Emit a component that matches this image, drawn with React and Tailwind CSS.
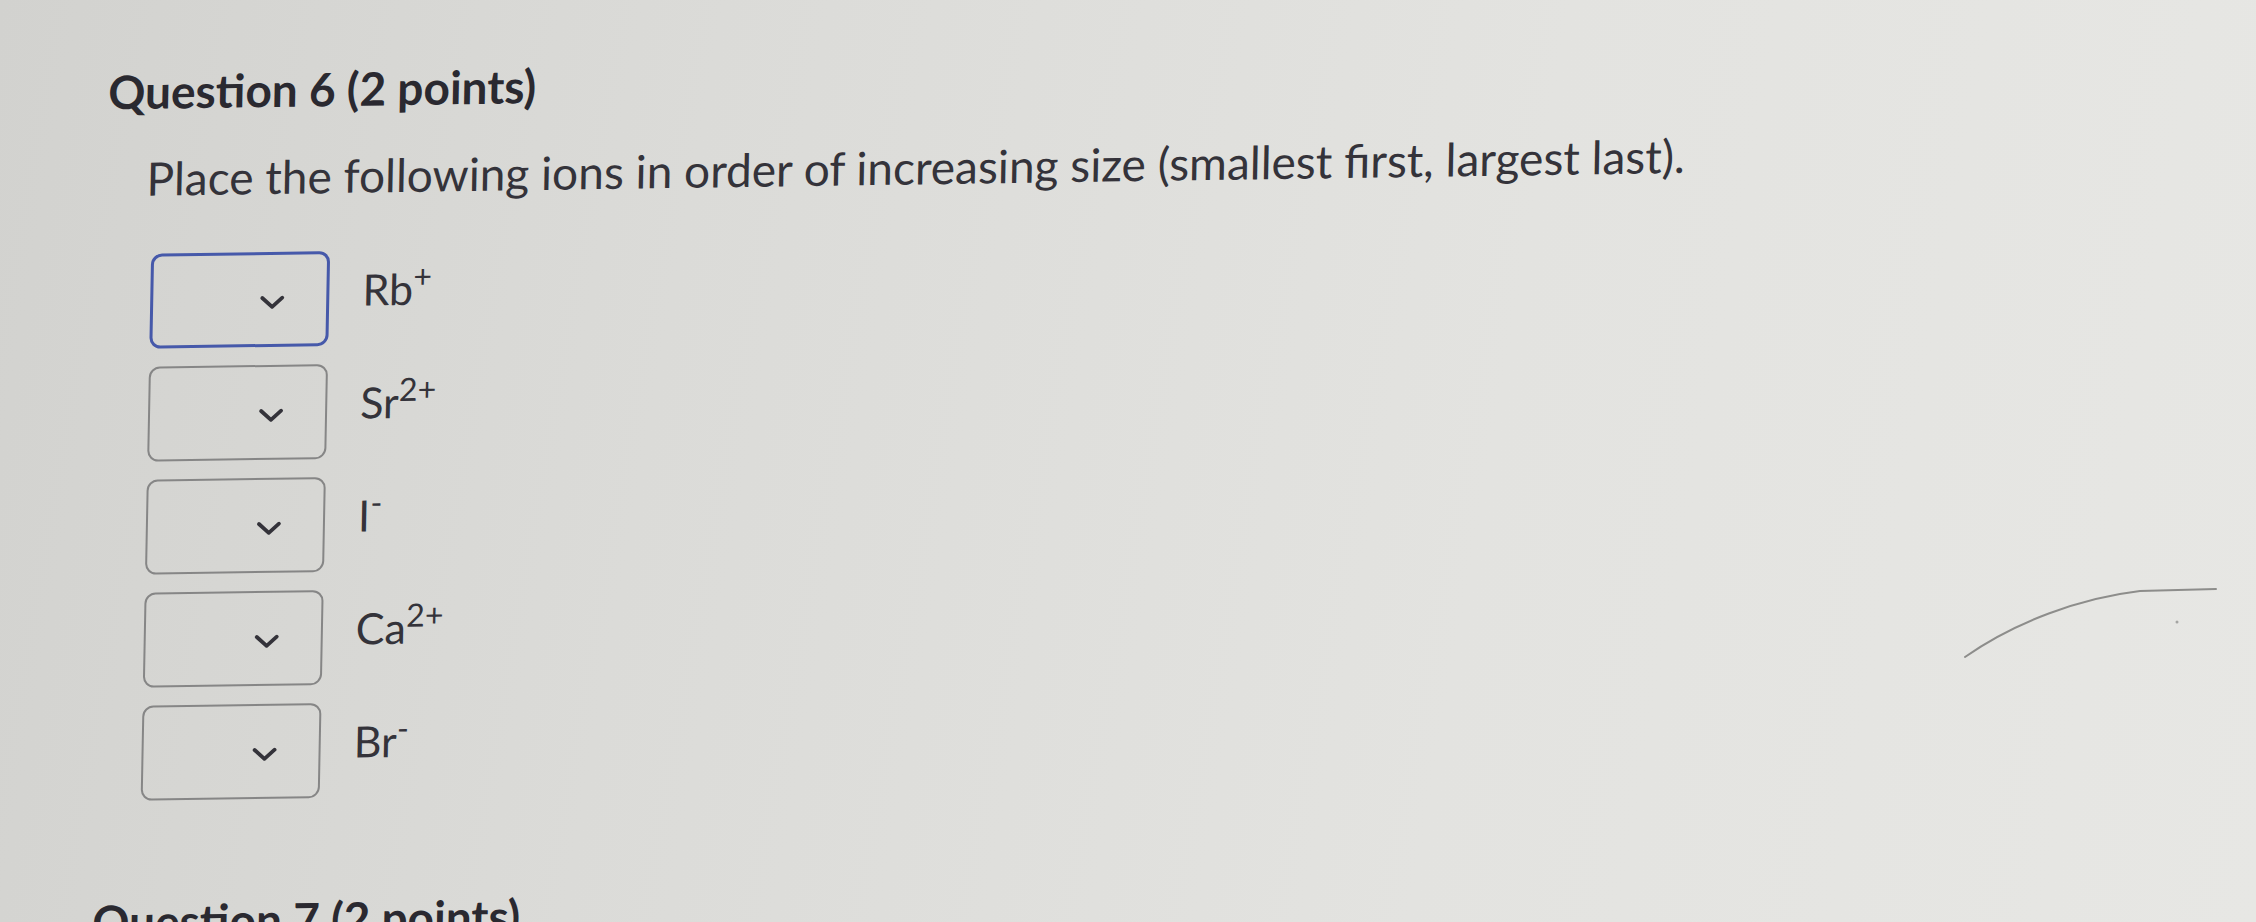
import React, { useState } from 'react';

const ions = [
  { id: 'rb', base: 'Rb', charge: '+' },
  { id: 'sr', base: 'Sr', charge: '2+' },
  { id: 'i', base: 'I', charge: '-' },
  { id: 'ca', base: 'Ca', charge: '2+' },
  { id: 'br', base: 'Br', charge: '-' },
];

const Chevron = () => (
  <svg width="26" height="15" viewBox="0 0 26 15" fill="none">
    <polyline points="3,3 13,12 23,3" stroke="#34333a" strokeWidth="3.8" strokeLinecap="round" strokeLinejoin="round" />
  </svg>
);

const RankSelect = ({ focused }) => (
  <div
    className={`w-[179px] h-[95px] shrink-0 rounded-[11px] flex items-center justify-end pr-[41px] pt-[6px] ${
      focused ? 'border-[3px] border-[#4659aa]' : 'border-2 border-[#868686]'
    }`}
  >
    <Chevron />
  </div>
);

const App = () => {
  const [active] = useState('rb');

  return (
    <div className="relative w-[2256px] h-[922px] overflow-hidden bg-[linear-gradient(100deg,#d2d2cf_0%,#dbdbd8_30%,#e3e3e0_65%,#e7e7e4_100%)] font-[Lato,sans-serif]">
      <div className="origin-top-left -skew-x-[1.1deg] -skew-y-[0.85deg] pl-[110px] pt-[71px]">
        {/* Question 6 */}
        <h2 className="text-[46px] leading-none font-bold text-[#2a2930]">Question 6 (2 points)</h2>

        <p className="mt-[41px] ml-[40px] text-[46px] leading-none text-[#34333a]">
          Place the following ions in order of increasing size (smallest first, largest last).
        </p>

        <div className="mt-[52px] ml-[46px] flex flex-col gap-[18px]">
          {ions.map(ion => (
            <div key={ion.id} className="flex items-start">
              <RankSelect focused={ion.id === active} />
              <div className="ml-[33px] pt-[17px] text-[43px] leading-none text-[#34333a] whitespace-nowrap">
                {ion.base}
                <sup className="text-[32px] leading-none relative -top-[7px] align-top">{ion.charge}</sup>
              </div>
            </div>
          ))}
        </div>

        {/* next question, only its top shows */}
        <h2 className="mt-[98px] text-[46px] leading-none font-bold text-[#2a2930]">Question 7 (2 points)</h2>
      </div>

      {/* pencil mark on the screen */}
      <svg className="absolute left-0 top-0 pointer-events-none" width="2256" height="922">
        <path d="M1965 657 C2015 622 2080 598 2140 591 L2216 589" stroke="#8d8d8b" strokeWidth="2" fill="none" strokeLinecap="round" />
        <circle cx="2177" cy="622" r="1.5" fill="#a5a5a3" />
      </svg>
    </div>
  );
};

export default App;
